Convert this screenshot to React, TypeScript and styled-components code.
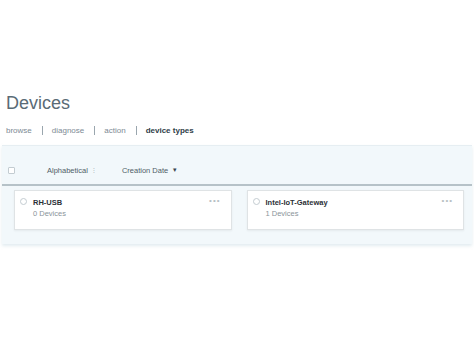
import React from "react";
import styled, { createGlobalStyle } from "styled-components";

interface DeviceType {
    name: string,
    count: number
}

const DEVICE_TYPES: DeviceType[] = [
    { name: "RH-USB", count: 0 },
    { name: "Intel-IoT-Gateway", count: 1 },
];

const TABS = ["browse", "diagnose", "action", "device types"];

const GlobalStyle = createGlobalStyle`
    body {
        margin: 0;
        background: #ffffff;
        font-family: "Liberation Sans", Arial, sans-serif;
    }
`

const Page = styled.div`
    width: 474px;
    height: 338px;
    padding-top: 90px;
    box-sizing: border-box;
`

const Title = styled.h1`
    margin: 0 0 0 6px;
    font-size: 18px;
    font-weight: 300;
    color: #5a6b76;
    line-height: 26px;
`

const Tabs = styled.nav`
    display: flex;
    align-items: center;
    margin: 7px 0 0 6px;
    height: 14px;
`

const Tab = styled.span<{ $active?: boolean }>`
    font-size: 8px;
    color: ${p => p.$active ? "#2f3d48" : "#7d8a94"};
    font-weight: ${p => p.$active ? 700 : 400};
`

const Separator = styled.span`
    width: 1px;
    height: 9px;
    background: #9aa6ae;
    margin: 0 9px 0 10px;
`

const Panel = styled.section`
    margin: 8px 2px 0 2px;
    background: #f2f8fb;
    border-top: 1px solid #e6eef2;
    box-shadow: 0 2px 3px rgba(200, 220, 228, 0.5);
    padding-bottom: 14px;
`

const Toolbar = styled.div`
    display: flex;
    align-items: center;
    height: 40px;
    padding: 10px 6px 0 6px;
    box-sizing: border-box;
    border-bottom: 2px solid #b6c2c8;
`

const Checkbox = styled.span<{ $round?: boolean }>`
    width: 5px;
    height: 5px;
    border: 1px solid #c3ccd1;
    border-radius: ${p => p.$round ? "50%" : "1px"};
    background: #fff;
    flex: none;
`

const SortButton = styled.span<{ $offset: number }>`
    display: flex;
    align-items: center;
    gap: 5px;
    margin-left: ${p => p.$offset}px;
    font-size: 7.5px;
    color: #4f5d67;
`

const SortMark = styled.span<{ $active?: boolean }>`
    font-size: 7px;
    color: ${p => p.$active ? "#3a4650" : "#a5b0b6"};
`

const Grid = styled.div`
    display: grid;
    grid-template-columns: 1fr 1fr;
    gap: 15px;
    padding: 4px 8px 0 12px;
`

const Card = styled.div`
    display: flex;
    align-items: flex-start;
    height: 40px;
    background: #ffffff;
    border: 1px solid #dfe3e5;
    box-shadow: 0 1px 2px rgba(0, 0, 0, 0.06);
    padding: 7px 10px 0 5px;
    box-sizing: border-box;
`

const CardBody = styled.div`
    flex: 1;
    margin-left: 6px;
`

const CardTitle = styled.div`
    font-size: 7.5px;
    font-weight: 700;
    color: #2b3036;
    line-height: 10px;
`

const CardSubtitle = styled.div`
    font-size: 7.5px;
    color: #8a949a;
    line-height: 11px;
`

const More = styled.span`
    font-size: 8px;
    letter-spacing: 1px;
    color: #b7bfc4;
    line-height: 6px;
`

const App = () => {
    return <Page>
        <GlobalStyle />
        <Title>Devices</Title>
        <Tabs>
            {TABS.map((tab, index) => <React.Fragment key={tab}>
                {index > 0 ? <Separator /> : null}
                <Tab $active={tab === "device types"}>{tab}</Tab>
            </React.Fragment>)}
        </Tabs>

        <Panel>
            <Toolbar>
                <Checkbox />
                <SortButton $offset={32}>Alphabetical <SortMark>⁝</SortMark></SortButton>
                <SortButton $offset={27}>Creation Date <SortMark $active>▾</SortMark></SortButton>
            </Toolbar>
            <Grid>
                {DEVICE_TYPES.map(item => <Card key={item.name}>
                    <Checkbox $round />
                    <CardBody>
                        <CardTitle>{item.name}</CardTitle>
                        <CardSubtitle>{item.count} Devices</CardSubtitle>
                    </CardBody>
                    <More>•••</More>
                </Card>)}
            </Grid>
        </Panel>
    </Page>
}

export default App;
